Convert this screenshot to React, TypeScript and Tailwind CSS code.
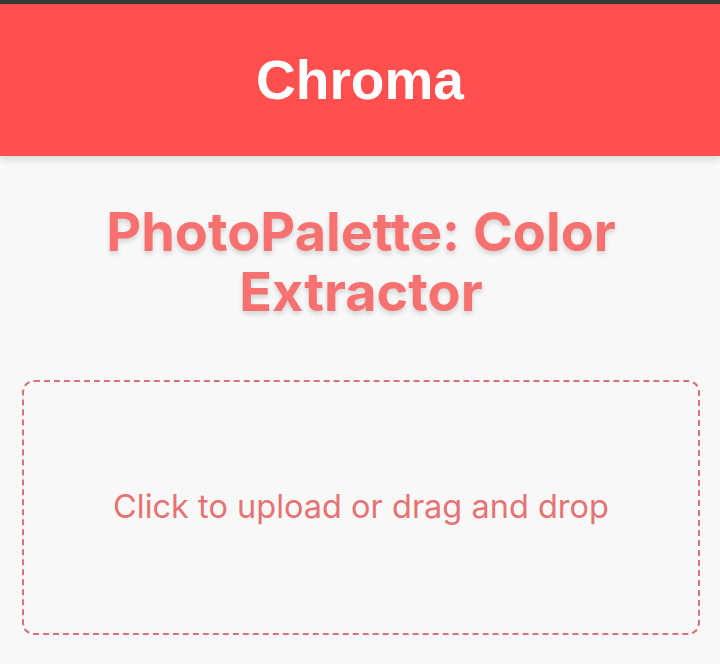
export default function App() {
  return (
    <div className="min-h-[664px] bg-[#f8f8f8] font-['Inter',sans-serif]">
      <div className="h-[4px] bg-[#3a3a3a]" />
      <header className="h-[152px] bg-[#ff4f4f] flex items-center justify-center shadow-[0_4px_8px_rgba(0,0,0,0.12)]">
        <h1 className="text-white font-bold text-[55px] font-['Liberation_Sans',Arial,sans-serif] leading-none">
          Chroma
        </h1>
      </header>
      <main className="pl-[22px] pr-[20px] pt-[46px]">
        <h2 className="text-center font-bold text-[54px] leading-[60px] text-[#f87171] [text-shadow:0_3px_5px_rgba(0,0,0,0.15)] px-[40px]">
          PhotoPalette: Color Extractor
        </h2>
        <div className="mt-[58px] h-[255px] border-[2.5px] border-dashed border-[#d8727a] rounded-[12px] flex items-center justify-center">
          <span className="text-[32.5px] text-[#e57373]">Click to upload or drag and drop</span>
        </div>
      </main>
    </div>
  );
}
